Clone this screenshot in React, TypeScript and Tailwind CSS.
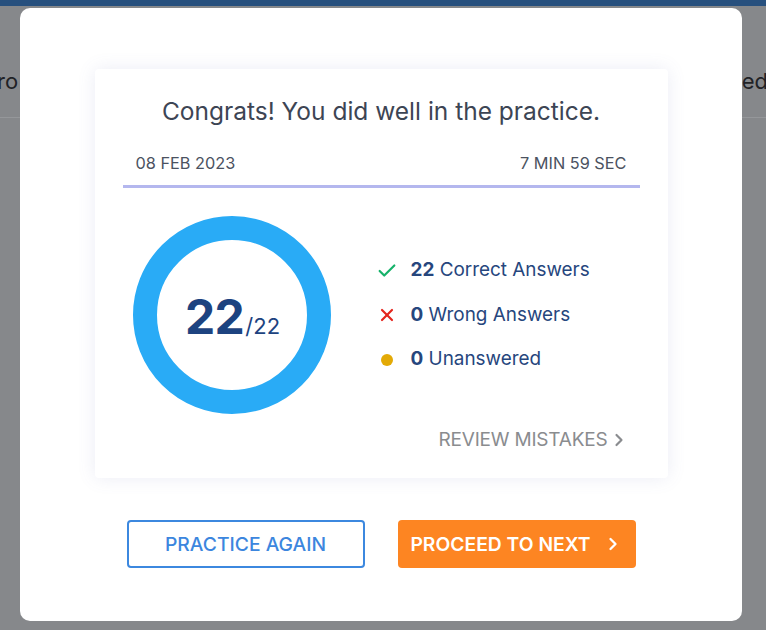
import React from 'react';
import { Check, X, ChevronRight } from 'lucide-react';

const stats = [
  { key: 'correct', count: 22, label: 'Correct Answers' },
  { key: 'wrong', count: 0, label: 'Wrong Answers' },
  { key: 'none', count: 0, label: 'Unanswered' },
];

function StatIcon({ kind }: { kind: string }) {
  if (kind === 'correct') return <Check className="w-[22px] h-[22px] text-[#16b26a]" strokeWidth={2.4} />;
  if (kind === 'wrong') return <X className="w-[20px] h-[20px] text-[#e4251d]" strokeWidth={2.6} />;
  return <span className="block w-[12px] h-[12px] rounded-full bg-[#e3aa06]" />;
}

export default function App() {
  return (
    <div
      className="relative w-[766px] h-[630px] overflow-hidden bg-[#86888b]"
      style={{ fontFamily: 'Inter, "Noto Sans", sans-serif' }}
    >
      {/* page behind the overlay */}
      <div className="h-[6px] bg-[#27507e]" />
      <div className="h-[112px] flex items-end justify-between pb-[22px] border-b border-[#95979a] text-[22px] leading-[28px] text-[#1f2226]">
        <span className="-ml-[3px]">ro</span>
        <span className="-mr-[2px]">ed</span>
      </div>

      {/* modal */}
      <div className="absolute left-[20px] top-[8px] w-[722px] h-[613px] bg-white rounded-[10px] flex flex-col items-center pt-[61px]">
        <div className="w-[573px] h-[409px] rounded-[4px] bg-white shadow-[0_0_18px_rgba(99,110,180,0.13)] flex flex-col px-[28px] pt-[26px]">
          <h2 className="text-center text-[24.5px] leading-[32px] text-[#3d4554]">
            Congrats! You did well in the practice.
          </h2>
          <div className="mt-[25px] flex justify-between px-[13px] text-[16.3px] leading-[22px] text-[#4b5261]">
            <span>08 FEB 2023</span>
            <span>7 MIN 59 SEC</span>
          </div>
          <div className="mt-[11px] h-[3px] bg-[#b4b7ee]" />

          <div className="mt-[28px] flex items-center pl-[10px]">
            <div className="w-[198px] h-[198px] rounded-full border-[24px] border-[#29abf6] flex items-center justify-center">
              <span className="flex items-baseline text-[#1d4380] pl-[2px] pt-[4px]">
                <span className="text-[48px] font-bold leading-none tracking-[-0.5px]">22</span>
                <span className="text-[22px] leading-none ml-[1px]">/22</span>
              </span>
            </div>
            <ul className="ml-[45px] flex flex-col gap-[20.5px]">
              {stats.map((s) => (
                <li key={s.key} className="flex items-center h-[24px] text-[18.9px] text-[#26467d]">
                  <span className="w-[22px] flex justify-center">
                    <StatIcon kind={s.key} />
                  </span>
                  <span className="ml-[13px]">
                    <b className="font-bold">{s.count}</b> {s.label}
                  </span>
                </li>
              ))}
            </ul>
          </div>

          <div className="mt-[14px] flex justify-end pr-[11px]">
            <button className="flex items-center h-[24px] text-[19px] text-[#8a8c8f] tracking-[-0.2px]">
              REVIEW MISTAKES
              <ChevronRight className="w-[20px] h-[20px] ml-[1px]" strokeWidth={2.6} />
            </button>
          </div>
        </div>

        <div className="mt-[42px] flex gap-[33px]">
          <button className="w-[238px] h-[48px] rounded-[4px] border-2 border-[#3c88df] text-[#3c86de] text-[19.3px] font-medium">
            PRACTICE AGAIN
          </button>
          <button className="w-[238px] h-[48px] rounded-[4px] bg-[#fd8522] text-white text-[19.3px] font-semibold flex items-center justify-center gap-[12px]">
            PROCEED TO NEXT
            <ChevronRight className="w-[20px] h-[20px]" strokeWidth={2.8} />
          </button>
        </div>
      </div>
    </div>
  );
}
